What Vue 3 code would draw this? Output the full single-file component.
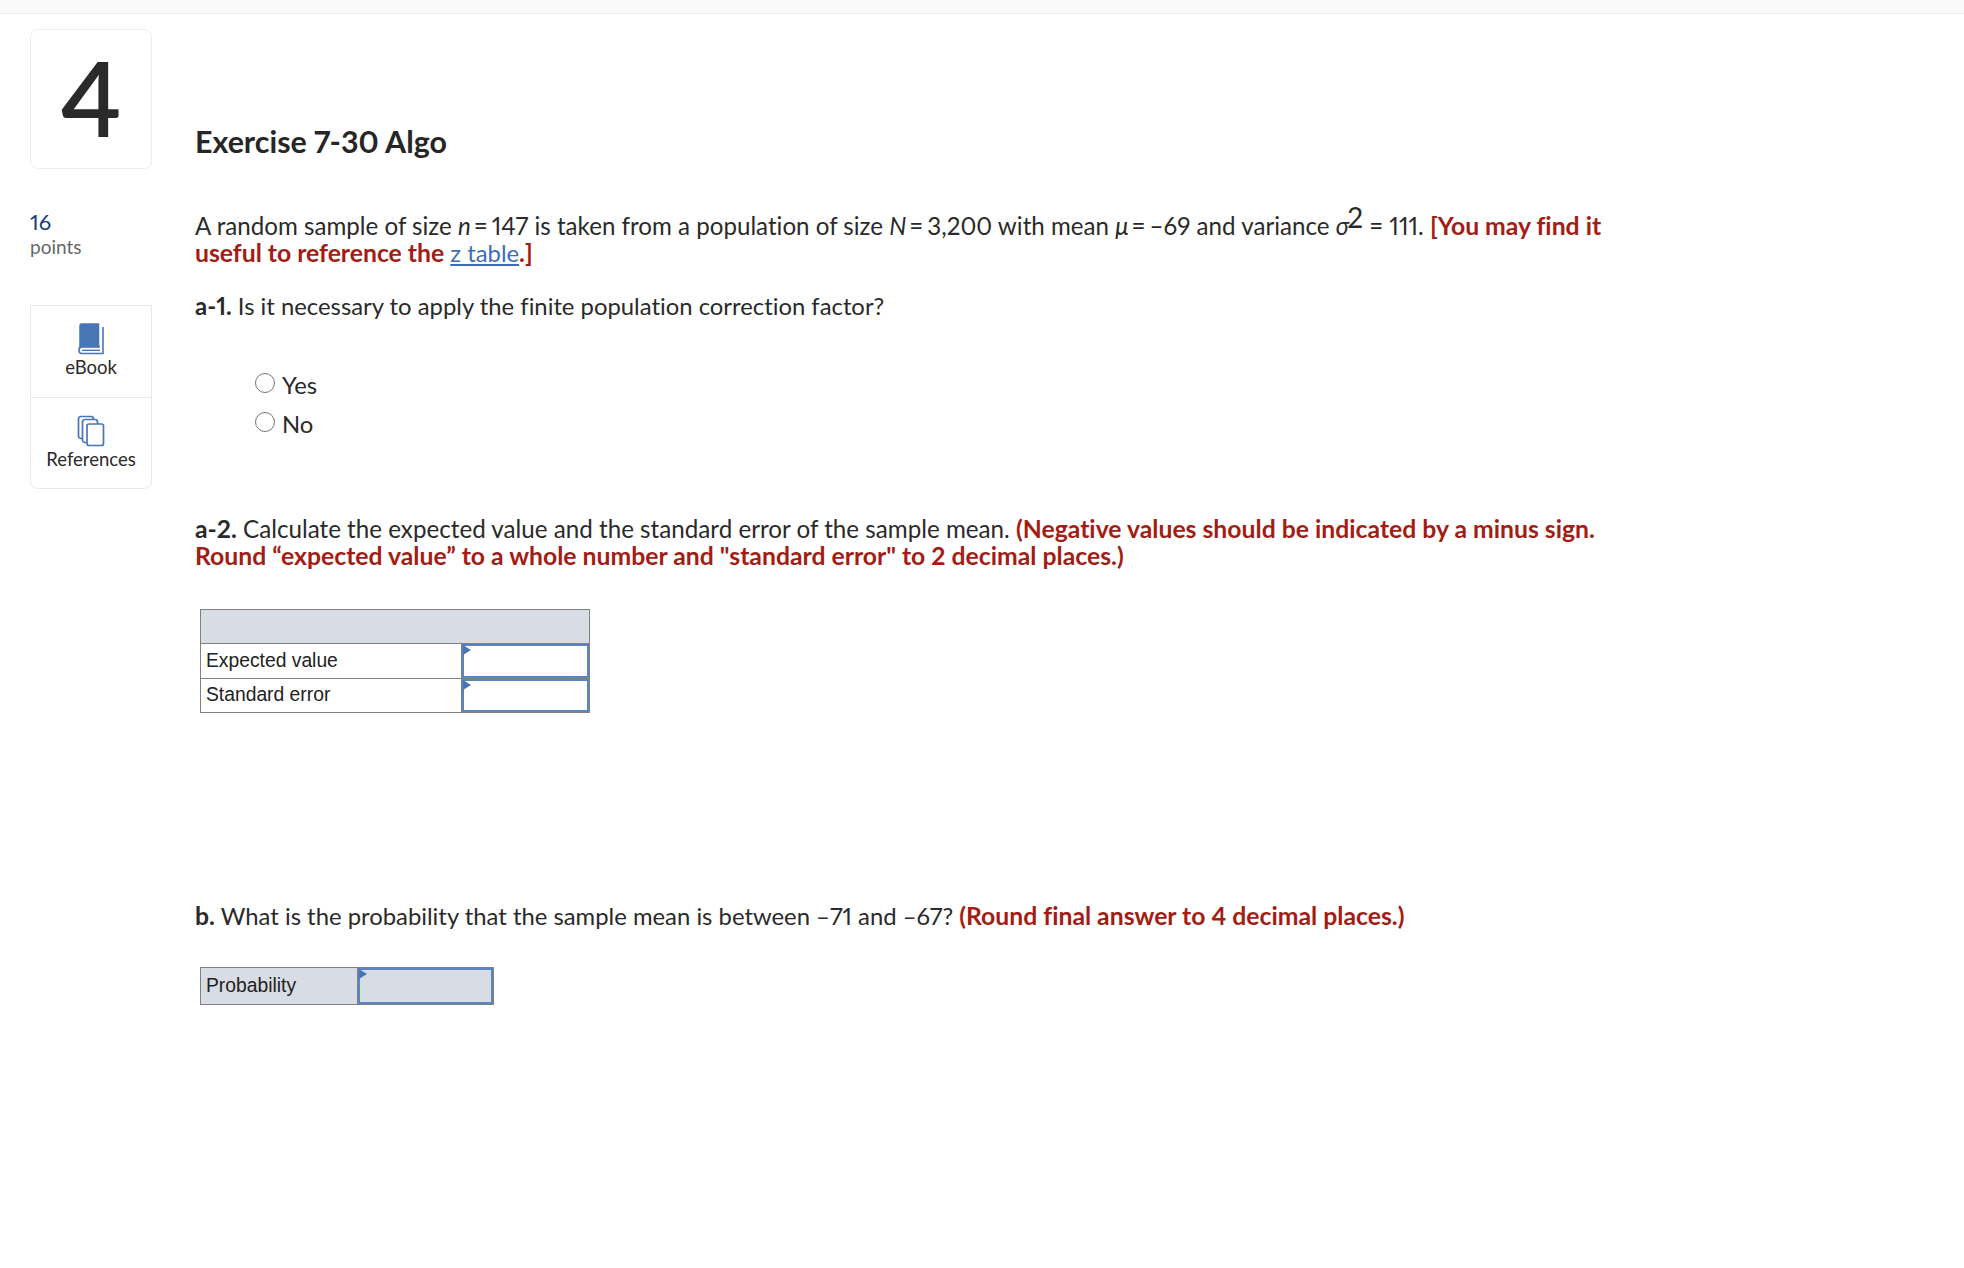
<template>
  <div class="page">
    <div class="top-bar"></div>
    <div class="question">
      <aside class="side">
        <div class="number-card">4</div>
        <div class="points-value">16</div>
        <div class="points-label">points</div>
        <div class="tools">
          <div class="tool">
            <svg class="tool-icon" viewBox="0 0 28 32" width="28" height="32">
              <path d="M4 1h17.5v23H5a2.6 2.6 0 0 0-2 .9V3a2 2 0 0 1 1-2z" fill="#4a75b5" stroke="#4a75b5" stroke-width="1.5" />
              <path d="M26 4v26.5H5a3 3 0 0 1-3-3v-1a3 3 0 0 1 3-3h18" fill="none" stroke="#4a75b5" stroke-width="1.6" />
              <path d="M5 27.3h18" stroke="#4a75b5" stroke-width="1.4" />
            </svg>
            <span>eBook</span>
          </div>
          <div class="tool">
            <svg class="tool-icon" viewBox="0 0 28 32" width="28" height="32">
              <g fill="#fff" stroke="#4a75b5" stroke-width="1.7" stroke-linejoin="round">
                <rect x="1.5" y="1.5" width="15" height="22" rx="2.5" />
                <rect x="5.5" y="4.5" width="15" height="23" rx="2.5" />
                <rect x="10" y="9" width="16.5" height="21.5" rx="2" />
              </g>
            </svg>
            <span>References</span>
          </div>
        </div>
      </aside>

      <main class="body">
        <h2 class="title">Exercise 7-30 Algo</h2>

        <p class="intro">
          A random sample of size <i>n</i><span class="eq">=</span>147 is taken from a population of size <i>N</i><span class="eq">=</span>3,200 with mean
          <i>μ</i><span class="eq">=</span>–69 and variance <i>σ</i><sup>2</sup> = 111.
          <b class="hint">[You may find it useful to reference the <a href="#" class="link">z table</a>.]</b>
        </p>

        <p class="part-one"><b>a-1.</b> Is it necessary to apply the finite population correction factor?</p>

        <div class="choices">
          <label v-for="choice in choices" :key="choice" class="choice">
            <input type="radio" name="fpc" class="radio" />
            <span>{{ choice }}</span>
          </label>
        </div>

        <p class="part-two">
          <b>a-2.</b> Calculate the expected value and the standard error of the sample mean.
          <b class="hint">(Negative values should be indicated by a minus sign. Round “expected value” to a whole number and "standard error" to 2 decimal places.)</b>
        </p>

        <table class="answers">
          <tbody>
            <tr class="head-row"><td colspan="2"></td></tr>
            <tr v-for="row in rows" :key="row">
              <td class="label-cell">{{ row }}</td>
              <td class="input-cell"><div class="answer-box"></div></td>
            </tr>
          </tbody>
        </table>

        <p class="part-b">
          <b>b.</b> What is the probability that the sample mean is between –71 and –67?
          <b class="hint">(Round final answer to 4 decimal places.)</b>
        </p>

        <table class="answers probability">
          <tbody>
            <tr>
              <td class="label-cell">Probability</td>
              <td class="input-cell"><div class="answer-box"></div></td>
            </tr>
          </tbody>
        </table>
      </main>
    </div>
  </div>
</template>

<script setup>
const choices = ['Yes', 'No']
const rows = ['Expected value', 'Standard error']
</script>

<style>
html, body { background: #fff; }
</style>

<style scoped>
.page {
  min-height: 1268px;
  font-family: Lato, "Open Sans", sans-serif;
  font-variant-ligatures: none;
  font-variant-numeric: proportional-nums;
  color: #2a2a2a;
  font-size: 23.85px;
  line-height: 27px;
}

.top-bar {
  height: 13px;
  background: #fafafa;
  border-bottom: 1px solid #ececec;
}

.question {
  display: flex;
  padding-left: 30px;
}

.side {
  width: 165px;
  flex: none;
  padding-top: 15px;
}

.number-card {
  box-sizing: border-box;
  width: 122px;
  height: 140px;
  border: 1px solid #eeeeee;
  border-radius: 8px;
  text-align: center;
  font-size: 104px;
  font-weight: 600;
  line-height: 134px;
  color: #2a2a2a;
}

.points-value {
  margin-top: 40px;
  color: #1c3f7c;
  font-size: 22px;
  line-height: 26px;
}

.points-label {
  color: #666;
  font-size: 19px;
  line-height: 24px;
}

.tools {
  box-sizing: border-box;
  width: 122px;
  margin-top: 46px;
  border: 1px solid #e8e8e8;
  border-radius: 0 0 8px 8px;
}

.tool {
  height: 91px;
  display: flex;
  flex-direction: column;
  align-items: center;
  padding-top: 17px;
  box-sizing: border-box;
  font-size: 18.5px;
  line-height: 22px;
}

.tool + .tool {
  border-top: 1px solid #e8e8e8;
}

.tool-icon {
  margin-bottom: 1px;
}

.body {
  flex: 1;
}

.title {
  margin: 110px 0 0;
  font-size: 30.4px;
  line-height: 34px;
  font-weight: 700;
  color: #262626;
}

p {
  margin: 0;
  width: 1420px;
}

b {
  font-size: 24.75px;
}

.intro {
  margin-top: 54px;
  font-size: 24.15px;
}

.intro sup {
  font-size: 28px;
  line-height: 0;
  vertical-align: 7px;
  margin-left: -2px;
}

.eq {
  margin: 0 4px 0 3px;
}

.hint {
  color: #a31d14;
}

.link {
  color: #3f6db5;
  font-size: 23.85px;
  font-weight: 400;
  text-decoration: underline;
}

.part-one {
  margin-top: 26px;
}

.part-one b {
  font-size: 24px;
}

.choices {
  margin: 52px 0 0 60px;
  display: flex;
  flex-direction: column;
  gap: 12px;
}

.choice {
  display: flex;
  align-items: center;
  gap: 7px;
}

.radio {
  width: 20px;
  height: 20px;
  margin: 0;
  position: relative;
  top: -2px;
  accent-color: #666;
}

.part-two {
  margin-top: 78px;
  font-size: 24.2px;
}

.answers {
  margin: 40px 0 0 5px;
  width: 390px;
  border-collapse: collapse;
  font-family: "Liberation Sans", Arial, sans-serif;
  font-size: 19.3px;
  line-height: 22px;
  color: #222;
}

.answers td {
  border: 1px solid #808080;
  padding: 0;
  height: 33.4px;
}

.head-row td {
  background: #d8dce4;
}

.label-cell {
  width: 255px;
  padding-left: 5px !important;
}

.input-cell {
  position: relative;
}

.answer-box {
  position: absolute;
  inset: 0;
  border: 2px solid #5a84c4;
}

.answer-box::before {
  content: "";
  position: absolute;
  left: -1px;
  top: -1px;
  border-left: 8px solid #4a75b5;
  border-top: 5px solid transparent;
  border-bottom: 5px solid transparent;
}

.part-b {
  margin-top: 189px;
}

.probability {
  margin-top: 38px;
  width: 294px;
}

.probability .label-cell {
  width: 151px;
  height: 36px;
  background: #d8dce4;
}

.probability .input-cell {
  background: #d8dce4;
}
</style>
